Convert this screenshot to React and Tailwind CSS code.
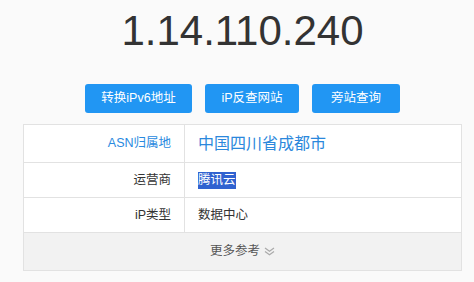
const rows = [
    { label: 'ASN归属地', value: '中国四川省成都市', labelClass: 'text-[#2a8ae0]', valueClass: 'text-[16px] text-[#2b88dc]', h: 'h-[38px]' },
    { label: '运营商', value: '腾讯云', highlight: true, h: 'h-[35px]' },
    { label: 'iP类型', value: '数据中心', h: 'h-[35px]' },
];

const App = () => {
    return (
        <div
            className="min-h-screen w-[474px] bg-[#fafafa] pt-[10px]"
            style={{ fontFamily: '"Liberation Sans", "Noto Sans CJK SC", sans-serif' }}
        >
            <div className="ml-[23px] w-[439px]">
                {/* IP title */}
                <h1 className="text-center text-[42px] leading-none text-[#333]">1.14.110.240</h1>

                {/* Action buttons */}
                <div className="mt-[32px] flex justify-center gap-[13px]">
                    <button className="h-[29px] w-[107px] rounded-[3px] bg-[#2196f3] text-[12.5px] text-white">转换iPv6地址</button>
                    <button className="h-[29px] w-[94px] rounded-[3px] bg-[#2196f3] text-[12.5px] text-white">iP反查网站</button>
                    <button className="h-[29px] w-[88px] rounded-[3px] bg-[#2196f3] text-[12.5px] text-white">旁站查询</button>
                </div>

                {/* Info table */}
                <div className="mt-[11px] border border-[#e2e2e2] bg-white">
                    {rows.map((row, index) => (
                        <div key={index} className={`flex border-b border-[#e2e2e2] ${row.h}`}>
                            <div className={`flex w-[161px] items-center justify-end border-r border-[#e2e2e2] pr-[13px] text-[12.5px] ${row.labelClass || 'text-[#333]'}`}>
                                {row.label}
                            </div>
                            <div className="flex flex-1 items-center pl-[13px]">
                                {row.highlight ? (
                                    <span className="bg-[#3062d0] text-[12.5px] leading-[17px] text-white">{row.value}</span>
                                ) : (
                                    <span className={row.valueClass || 'text-[12.5px] text-[#333]'}>{row.value}</span>
                                )}
                            </div>
                        </div>
                    ))}
                    <div className="flex h-[37px] items-center justify-center gap-[4px] bg-[#f2f2f2] text-[12.5px] text-[#555]">
                        <span>更多参考</span>
                        <svg width="11" height="9" viewBox="0 0 11 9" fill="none" stroke="#aaa" strokeWidth="1.2">
                            <polyline points="1,1 5.5,4.2 10,1" />
                            <polyline points="1,4.5 5.5,7.7 10,4.5" />
                        </svg>
                    </div>
                </div>
            </div>
        </div>
    );
};

export default App;
